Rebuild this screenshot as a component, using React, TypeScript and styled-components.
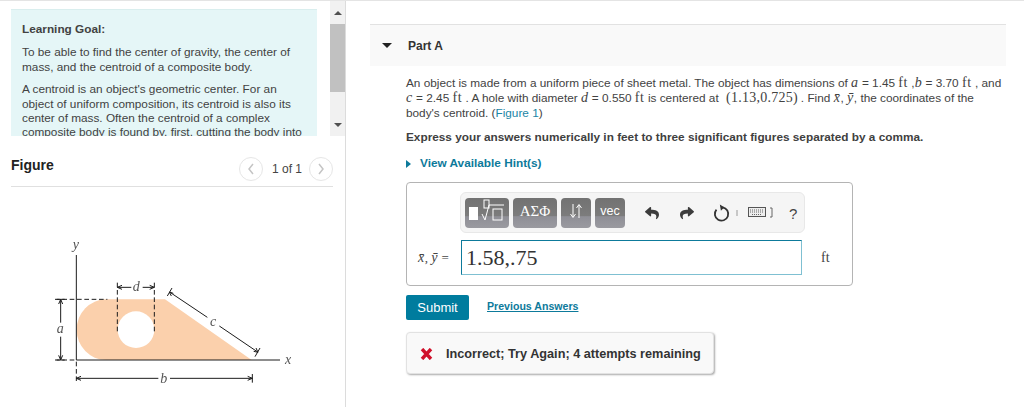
import styled, { createGlobalStyle } from 'styled-components';
import { FaReply, FaShare } from 'react-icons/fa';

const Global = createGlobalStyle`
	html, body { margin: 0; padding: 0; background: #fff; }
	body { font-family: "Liberation Sans", Arial, sans-serif; font-size: 11.8px; color: #424242; overflow: hidden; }
`;

const Page = styled.div`
	display: flex;
	width: 1024px;
	height: 407px;
	overflow: hidden;
	border-top: 1px solid #e4e4e4;
	box-sizing: border-box;
`;

const LeftColumn = styled.div`
	width: 346px;
	flex: none;
	box-sizing: border-box;
	border-right: 1px solid #dcdcdc;
`;

const ScrollPane = styled.div`
	display: flex;
	height: 135px;
	padding-left: 11px;
`;

const GoalBox = styled.div`
	width: 306px;
	height: 127px;
	margin-top: 8px;
	padding: 12px 11px 0;
	box-sizing: border-box;
	overflow: hidden;
	flex: none;
	background: #e5f6f7;
	border-top: 1px solid #d9eeee;
	line-height: 14.4px;
`;

const GoalTitle = styled.div`
	font-weight: bold;
	margin-bottom: 9px;
`;

const GoalPara = styled.p`
	margin: 0 0 8px;
`;

const ScrollBar = styled.div`
	margin-left: 13px;
	width: 15px;
	display: flex;
	flex-direction: column;
	align-items: stretch;
	background: #f1f1f1;
`;

const ScrollArrow = styled.div<{ $up?: boolean }>`
	height: 23px;
	display: flex;
	align-items: center;
	justify-content: center;
	flex: none;
	&::after {
		content: '';
		border-left: 4px solid transparent;
		border-right: 4px solid transparent;
		${(p) => (p.$up ? 'border-bottom: 4px solid #505050;' : 'border-top: 4px solid #505050;')}
	}
`;

const ScrollThumb = styled.div`
	height: 68px;
	flex: none;
	background: #c1c1c1;
`;

const ScrollRest = styled.div`
	flex: 1;
`;

const FigureHeader = styled.div`
	display: flex;
	align-items: flex-start;
	justify-content: space-between;
	margin: 0 12px 0 11px;
	height: 51px;
	box-sizing: border-box;
	border-bottom: 1px solid #e0e0e0;
	padding-top: 21px;
`;

const FigureTitle = styled.div`
	font-size: 14px;
	font-weight: bold;
	color: #222;
`;

const Pager = styled.div`
	display: flex;
	align-items: center;
	gap: 9px;
	font-size: 12px;
	color: #444;
`;

const PagerLabel = styled.span`
	margin-right: -2px;
`;

const PagerButton = styled.div`
	width: 24px;
	height: 24px;
	box-sizing: border-box;
	border: 1px solid #e6e6e6;
	border-radius: 50%;
	display: flex;
	align-items: center;
	justify-content: center;
`;

const FigureSvg = styled.svg`
	display: block;
	margin: 43px 0 0 30px;
	filter: blur(0.35px);
`;

const RightColumn = styled.div`
	flex: 1;
	padding: 23px 18px 0 24px;
	min-width: 0;
`;

const PartHeader = styled.div`
	height: 42px;
	box-sizing: border-box;
	border-top: 1px solid #e2e2e2;
	background: #f9f9f9;
	display: flex;
	align-items: center;
	padding-left: 12px;
	font-size: 12px;
	font-weight: bold;
	color: #333;
`;

const Caret = styled.span`
	width: 0;
	height: 0;
	border-left: 5px solid transparent;
	border-right: 5px solid transparent;
	border-top: 5px solid #222;
	margin-right: 16px;
	margin-top: -1px;
`;

const PartBody = styled.div`
	padding: 10px 0 0 36px;
	line-height: 15px;
`;

const Prompt = styled.p`
	margin: 0;
	width: 596px;
`;

const M = styled.span<{ $i?: boolean }>`
	font-family: "Liberation Serif", "DejaVu Serif", serif;
	font-size: 14px;
	line-height: 0;
	letter-spacing: 0.6px;
	font-style: ${(p) => (p.$i ? 'italic' : 'normal')};
`;

const Coords = styled(M)`
	letter-spacing: 0.25px;
	margin: 0 3px 0 4px;
`;

const Link = styled.span`
	color: #1a86a6;
`;

const Instruction = styled.p`
	margin: 9px 0 0;
	font-weight: bold;
	color: #404040;
`;

const HintRow = styled.div`
	display: flex;
	align-items: center;
	gap: 9px;
	margin-top: 11px;
	font-weight: bold;
	color: #0d7a9b;
	&::before {
		content: '';
		border-top: 4px solid transparent;
		border-bottom: 4px solid transparent;
		border-left: 5px solid #0d7a9b;
	}
`;

const AnswerBox = styled.div`
	margin-top: 11px;
	width: 447px;
	height: 104px;
	box-sizing: border-box;
	border: 1px solid #b4b4b4;
	border-radius: 4px;
	padding: 9px 0 0 53px;
`;

const Toolbar = styled.div`
	width: 345px;
	height: 41px;
	box-sizing: border-box;
	background: #f5f5f5;
	border: 1px solid #e8e8e8;
	border-radius: 6px;
	padding: 5px 0 0 4px;
	display: flex;
	align-items: flex-start;
	gap: 4px;
`;

const ToolButton = styled.div<{ $w: number }>`
	width: ${(p) => p.$w}px;
	height: 30px;
	border-radius: 4px;
	background: linear-gradient(#727272 0, #7c7c7c 60%, #8f8f96 62%, #9a9aa0 100%);
	color: #fff;
	display: flex;
	align-items: center;
	justify-content: center;
	padding-bottom: 4px;
	box-sizing: border-box;
	font-size: 12.5px;
	flex: none;
`;

const SerifGlyphs = styled.span`
	font-family: "Liberation Serif", serif;
	font-size: 15px;
`;

const PlainTool = styled.div<{ $ml: number }>`
	margin-left: ${(p) => p.$ml}px;
	height: 30px;
	display: flex;
	align-items: center;
	color: #3c3c3c;
	flex: none;
`;

const QuestionMark = styled.span`
	font-size: 15px;
	color: #444;
`;

const InputRow = styled.div`
	display: flex;
	align-items: center;
	margin: 7px 0 0 -43px;
`;

const InputLabel = styled.span`
	width: 43px;
	padding-left: 1px;
	flex: none;
	font-family: "Liberation Serif", serif;
	font-size: 13px;
	color: #444;
	white-space: nowrap;
`;

const AnswerInput = styled.div`
	width: 341px;
	height: 35px;
	box-sizing: border-box;
	border: 1px solid #7fc0d2;
	border-top-color: #0d7a9b;
	border-left-color: #0d7a9b;
	padding-left: 4px;
	font-family: "Liberation Serif", serif;
	font-size: 22px;
	line-height: 33px;
	color: #333;
`;

const Unit = styled.span`
	margin-left: 19px;
	font-family: "Liberation Serif", serif;
	font-size: 14px;
`;

const ActionRow = styled.div`
	display: flex;
	align-items: center;
	margin-top: 9px;
`;

const Submit = styled.div`
	width: 63px;
	height: 25px;
	border-radius: 2px;
	background: #007c9e;
	color: #fff;
	font-size: 13px;
	display: flex;
	align-items: center;
	justify-content: center;
`;

const PreviousLink = styled.span`
	margin-left: 18px;
	font-size: 10.6px;
	font-weight: bold;
	color: #0d7a9b;
	text-decoration: underline;
	position: relative;
	top: -1px;
`;

const Feedback = styled.div`
	margin-top: 12px;
	width: 308px;
	height: 42px;
	box-sizing: border-box;
	background: #f9f9f9;
	border: 1px solid #e2e2e2;
	border-radius: 4px;
	box-shadow: 1px 1px 2px #aaa;
	display: flex;
	align-items: center;
	padding: 2px 0 0 13px;
	gap: 13px;
	font-weight: bold;
	font-size: 12.7px;
	color: #333;
`;

function Figure() {
	const ink = '#1c1c1c';
	const arrow = (x: number, y: number, dir: number) => (
		<path d={`M${x + dir * 14} ${y - 6}L${x} ${y}L${x + dir * 14} ${y + 6}`} fill="none" stroke={ink} strokeWidth="3" />
	);
	return (
		<FigureSvg width="280" height="177" viewBox="0 0 840 531">
			<path d="M228 208H405L665 390H228A88 91 0 0 1 140 299A88 91 0 0 1 228 208Z" fill="#fbd0ac" />
			<circle cx="318" cy="299" r="55" fill="#fff" />
			<g stroke={ink} strokeWidth="3" fill="none">
				<path d="M139 75V390H750" />
				<path d="M139 395V458" strokeDasharray="14 8" />
				<path d="M75 208H232M75 390H139" strokeDasharray="14 8" />
				<path d="M262 158V308M373 158V308" strokeDasharray="14 8" />
				<path d="M262 172H304M338 172H373" />
				<path d="M92 208V278M92 320V390M80 208H104M80 390H104" />
				<path d="M139 445H385M420 445H667M667 432V458" />
				<path d="M420 187L532 262M568 288L683 366M426 174L412 198M690 354L675 380" />
				<path d="M430 190L418 186L424 198M671 364L684 367L678 354" />
			</g>
			{arrow(262, 172, 1)}
			{arrow(373, 172, -1)}
			{arrow(139, 445, 1)}
			{arrow(667, 445, -1)}
			<path d="M86 222L92 208L98 222M86 376L92 390L98 376" fill="none" stroke={ink} strokeWidth="3" />
			<g fontFamily="Liberation Serif, serif" fontStyle="italic" fontSize="42" fill="#555">
				<text x="128" y="58">y</text>
				<text x="308" y="184">d</text>
				<text x="80" y="310">a</text>
				<text x="540" y="287">c</text>
				<text x="391" y="458">b</text>
				<text x="765" y="402">x</text>
			</g>
		</FigureSvg>
	);
}

function App() {
	return (
		<>
			<Global />
			<Page>
				<LeftColumn>
					<ScrollPane>
						<GoalBox>
							<GoalTitle>Learning Goal:</GoalTitle>
							<GoalPara>To be able to find the center of gravity, the center of mass, and the centroid of a composite body.</GoalPara>
							<GoalPara>A centroid is an object's geometric center. For an object of uniform composition, its centroid is also its center of mass. Often the centroid of a complex composite body is found by, first, cutting the body into</GoalPara>
						</GoalBox>
						<ScrollBar>
							<ScrollArrow $up />
							<ScrollThumb />
							<ScrollRest />
							<ScrollArrow />
						</ScrollBar>
					</ScrollPane>
					<FigureHeader>
						<FigureTitle>Figure</FigureTitle>
						<Pager>
							<PagerButton>
								<svg width="8" height="12" viewBox="0 0 8 12"><path d="M6 1L2 6L6 11" fill="none" stroke="#c4c4c4" strokeWidth="1.5" /></svg>
							</PagerButton>
							<PagerLabel>1 of 1</PagerLabel>
							<PagerButton>
								<svg width="8" height="12" viewBox="0 0 8 12"><path d="M2 1L6 6L2 11" fill="none" stroke="#c4c4c4" strokeWidth="1.5" /></svg>
							</PagerButton>
						</Pager>
					</FigureHeader>
					<Figure />
				</LeftColumn>
				<RightColumn>
					<PartHeader>
						<Caret />
						Part A
					</PartHeader>
					<PartBody>
						<Prompt>
							An object is made from a uniform piece of sheet metal. The object has dimensions of <M $i>a</M> = 1.45 <M>ft</M> ,<M $i>b</M> = 3.70 <M>ft</M> , and <M $i>c</M> = 2.45 <M>ft</M> . A hole with diameter <M $i>d</M> = 0.550 <M>ft</M> is centered at <Coords>(1.13,0.725)</Coords>. Find <M $i>x̄</M>, <M $i>ȳ</M>, the coordinates of the body's centroid. (<Link>Figure 1</Link>)
						</Prompt>
						<Instruction>Express your answers numerically in feet to three significant figures separated by a comma.</Instruction>
						<HintRow>View Available Hint(s)</HintRow>
						<AnswerBox>
							<Toolbar>
								<ToolButton $w={44}>
									<svg width="38" height="24" viewBox="0 0 38 24">
										<rect x="1" y="8" width="9" height="13" fill="#fff" />
										<rect x="16" y="1" width="5" height="8" fill="none" stroke="#fff" />
										<path d="M14 15l3 6l4-15H36" fill="none" stroke="#fff" />
										<rect x="25" y="10" width="9" height="11" fill="none" stroke="#fff" />
									</svg>
								</ToolButton>
								<ToolButton $w={44}><SerifGlyphs>ΑΣΦ</SerifGlyphs></ToolButton>
								<ToolButton $w={30}>
									<svg width="14" height="16" viewBox="0 0 14 16">
										<path d="M4 1V14M1.5 11L4 14.5L6.5 11M10 15V2M7.5 5L10 1.5L12.5 5" fill="none" stroke="#fff" />
									</svg>
								</ToolButton>
								<ToolButton $w={30}>vec</ToolButton>
								<PlainTool $ml={16}><FaReply size={14} /></PlainTool>
								<PlainTool $ml={17}><FaShare size={14} /></PlainTool>
								<PlainTool $ml={14}>
									<svg width="19" height="19" viewBox="0 0 17 17">
										<path d="M9.5 3A6 6 0 1 1 4 5" fill="none" stroke="#333" strokeWidth="1.6" />
										<path d="M7 0.5L11 3L8 6Z" fill="#333" />
									</svg>
								</PlainTool>
								<PlainTool $ml={1}>
									<svg width="3" height="6" viewBox="0 0 3 6"><path d="M1 0V6" stroke="#999" /></svg>
								</PlainTool>
								<PlainTool $ml={5}>
									<svg width="26" height="12" viewBox="0 0 26 12">
										<rect x="0.5" y="0.5" width="17" height="9" fill="#eee" stroke="#555" />
										<path d="M2 3H16M2 5H16M4 7.5H14" stroke="#666" strokeDasharray="1 1" />
										<path d="M22 1H24V10H22" fill="none" stroke="#666" />
									</svg>
								</PlainTool>
								<PlainTool $ml={11}><QuestionMark>?</QuestionMark></PlainTool>
							</Toolbar>
							<InputRow>
								<InputLabel><M $i>x̄</M>, <M $i>ȳ</M> =</InputLabel>
								<AnswerInput>1.58,.75</AnswerInput>
								<Unit>ft</Unit>
							</InputRow>
						</AnswerBox>
						<ActionRow>
							<Submit>Submit</Submit>
							<PreviousLink>Previous Answers</PreviousLink>
						</ActionRow>
						<Feedback>
							<svg width="13" height="12" viewBox="0 0 13 12"><path d="M2 1L11 11M11 1L2 11" stroke="#d0102a" strokeWidth="3.4" /></svg>
							Incorrect; Try Again; 4 attempts remaining
						</Feedback>
					</PartBody>
				</RightColumn>
			</Page>
		</>
	);
}

export default App;
